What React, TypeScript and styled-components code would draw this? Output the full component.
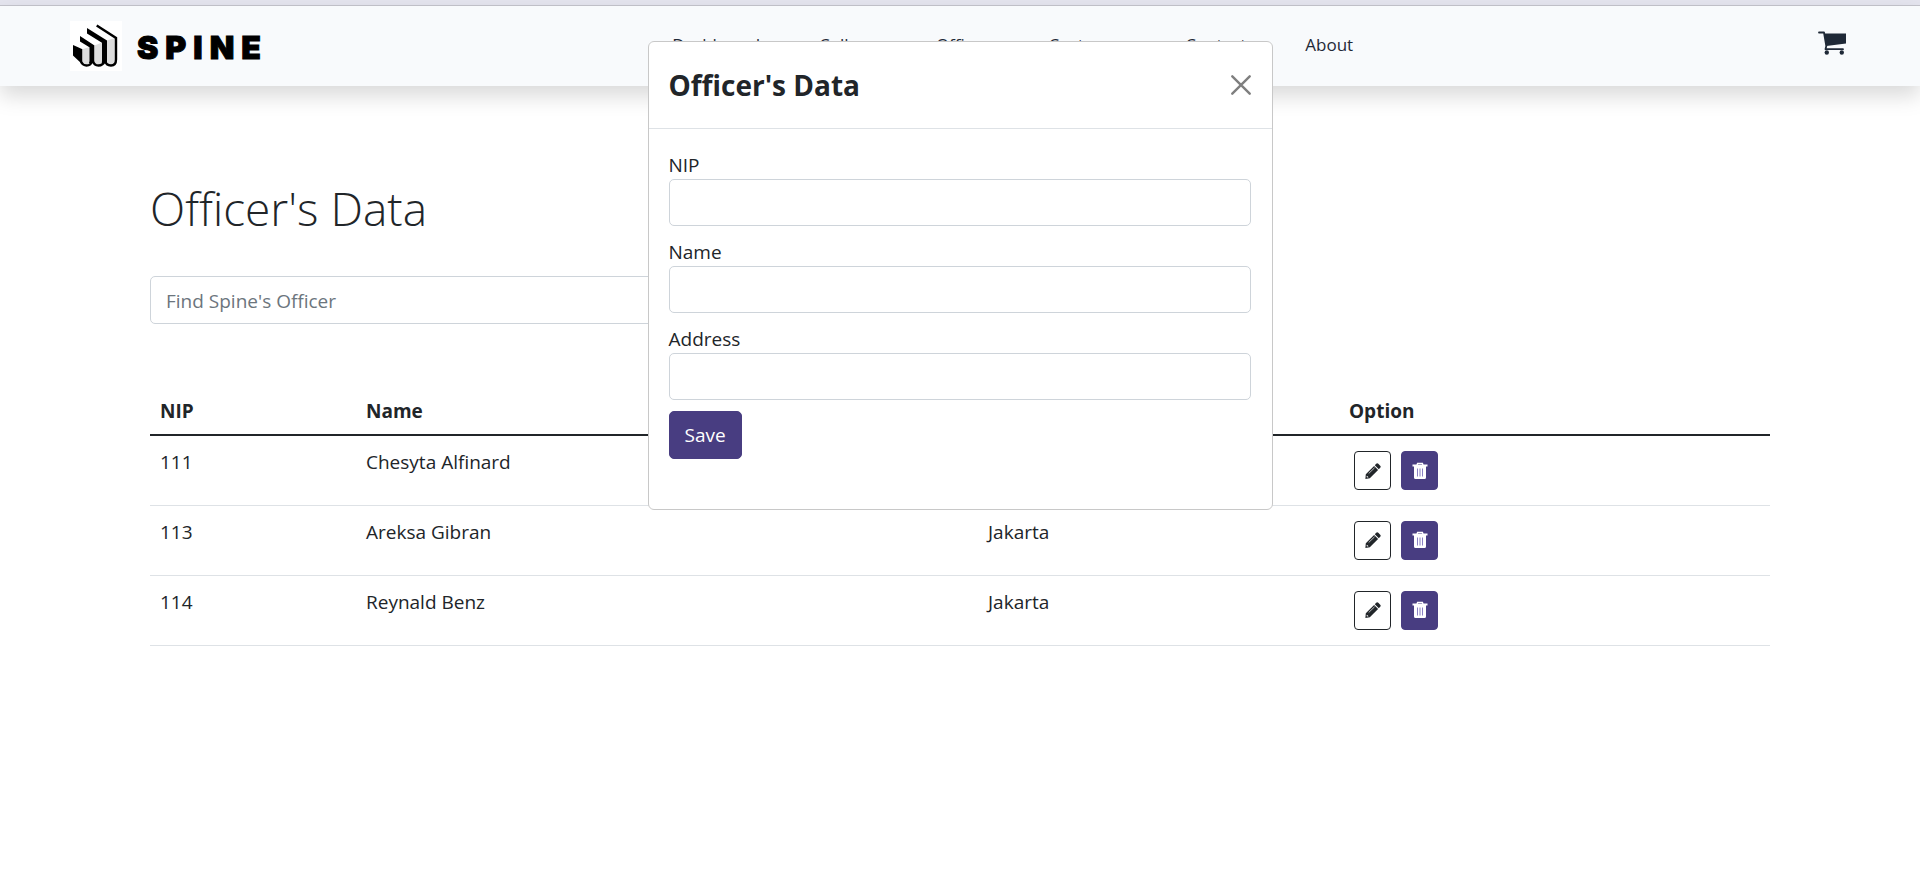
import React from "react";
import styled, { createGlobalStyle } from "styled-components";

const Global = createGlobalStyle`
  *, *::before, *::after { box-sizing: border-box; }
  body {
    margin: 0;
    background: #fff;
    color: #212529;
    font-family: "Open Sans", "Noto Sans", sans-serif;
    font-size: 19px;
    line-height: 30px;
  }
  button, input { font: inherit; color: inherit; }
`;

const TopStrip = styled.div`
  height: 6px;
  background: #e4e4ee;
  border-bottom: 1px solid #c4c4cc;
`;

const Navbar = styled.header`
  display: grid;
  grid-template-columns: 11fr auto 9fr;
  align-items: center;
  height: 80px;
  padding: 0 74px 0 70px;
  background: #f8fafc;
  box-shadow: 0 10px 20px rgba(0, 0, 0, 0.15);
`;

const Brand = styled.a`
  display: flex;
  align-items: center;
  gap: 15px;
  color: #000;
  text-decoration: none;
`;

const BrandName = styled.span`
  padding-top: 3px;
  font-family: Inter, sans-serif;
  font-size: 32px;
  font-weight: 900;
  line-height: 40px;
  letter-spacing: 7px;
  -webkit-text-stroke: 1px #000;
`;

const NavLinks = styled.nav`
  display: flex;
  gap: 59px;
  padding-bottom: 3px;
`;

const NavLink = styled.a`
  color: #1f2937;
  font-size: 17px;
  font-weight: 500;
  text-decoration: none;
`;

const CartLink = styled.a`
  display: flex;
  justify-self: end;
  padding-bottom: 6px;
  color: #1f2937;
`;

const Container = styled.main`
  max-width: 1650px;
  margin: 0 auto;
  padding: 92px 15px 0;
`;

const PageTitle = styled.h1`
  margin: 0 0 38px;
  font-size: 46px;
  font-weight: 300;
  line-height: 60px;
`;

const TextInput = styled.input`
  display: block;
  width: 100%;
  height: 47px;
  padding: 0 15px;
  border: 1px solid #ced4da;
  border-radius: 5px;
  background: #fff;
`;

const SearchInput = styled(TextInput)`
  width: 50%;
  height: 48px;
  padding-top: 2px;
  &::placeholder { color: #6c757d; opacity: 1; }
`;

const Table = styled.table`
  width: 100%;
  margin-top: 60px;
  border-collapse: collapse;
  table-layout: fixed;
`;

const HeadCell = styled.th<{ $width: string }>`
  width: ${(p) => p.$width};
  height: 51px;
  padding: 11px 10px 8px;
  border-bottom: 2px solid #212529;
  font-weight: 700;
  text-align: left;
`;

const Cell = styled.td`
  height: 70px;
  padding: 11px 10px 10px;
  border-bottom: 1px solid #dee2e6;
  vertical-align: top;
`;

const Actions = styled.div`
  display: flex;
  gap: 10px;
  padding: 4px 5px 0;
`;

const IconButton = styled.button<{ $filled?: boolean }>`
  display: flex;
  align-items: center;
  justify-content: center;
  width: 37px;
  height: 39px;
  padding: 0;
  border: 1px solid ${(p) => (p.$filled ? "#483d81" : "#212529")};
  border-radius: 4px;
  background: ${(p) => (p.$filled ? "#483d81" : "#fff")};
  color: ${(p) => (p.$filled ? "#fff" : "#212529")};
`;

const ModalLayer = styled.div`
  position: fixed;
  inset: 0;
  display: flex;
  align-items: flex-start;
  justify-content: center;
  padding-top: 41px;
`;

const Modal = styled.section`
  width: 625px;
  border: 1px solid #c8c8c8;
  border-radius: 6px;
  background: #fff;
`;

const ModalHeader = styled.div`
  display: flex;
  align-items: center;
  justify-content: space-between;
  height: 87px;
  padding: 0 21px 0 20px;
  border-bottom: 1px solid #dee2e6;
`;

const ModalTitle = styled.h2`
  margin: 0;
  font-size: 28px;
  font-weight: 700;
  line-height: 40px;
`;

const CloseButton = styled.button`
  display: flex;
  padding: 0;
  border: 0;
  background: none;
  color: #7f7f7f;
`;

const Form = styled.form`
  padding: 20px 21px 50px 20px;
`;

const Field = styled.label`
  display: block;
  margin-bottom: 10px;
`;

const FieldName = styled.span`
  display: block;
  padding-top: 2px;
  line-height: 28px;
`;

const SaveButton = styled.button`
  height: 48px;
  margin-top: 1px;
  padding: 0 15px;
  border: 1px solid #483d81;
  border-radius: 5px;
  background: #483d81;
  color: #fff;
  font-weight: 500;
`;

const Logo = () => (
  <svg width="52" height="50" viewBox="0 0 52 50" aria-hidden="true">
    <rect width="52" height="50" fill="#fff" />
    <g fill="#000">
      <path d="M3 24 L12.500 28.300 V43.500 L3 34.500Z" />
      <path d="M10 15 L24.500 24.500 V42 H19 V26 L10 20.500Z" />
      <path d="M17 7 L37 19.500 V42 H31.500 V21.500 L17 12.500Z" />
    </g>
    <g fill="#ddd" stroke="none">
      <path d="M12.500 28.300 L19.500 26 V40 Q19 44 16 44 Q12.500 44 12.500 39Z" />
      <path d="M24.500 24.500 L32 21.500 V40 Q31.500 44 28.200 44 Q24.500 44 24.500 39Z" />
      <path d="M37 19.500 L45 17 V39 Q45 44 41 44 Q37 44 37 39Z" />
    </g>
    <path d="M26.700 4.500 L46 17 V38.500 Q46 44.500 41 44.500 Q36 44.500 35 39.500 Q33 44.500 28.500 44.500 Q24 44.500 22.500 39.500 Q21 44.500 16.500 44.500 Q13 44.500 11 41" fill="none" stroke="#000" strokeWidth="2.400" />
  </svg>
);

const Cart = () => (
  <svg width="28" height="24" viewBox="0 0 28 24" aria-hidden="true" fill="currentColor">
    <path d="M6.300 2.500 H28 V12.500 L8.300 15Z" />
    <path d="M1 1.500 H6 L8.300 15 L7.500 18.200 H25" fill="none" stroke="currentColor" strokeWidth="1.800" strokeLinecap="round" strokeLinejoin="round" />
    <circle cx="8.800" cy="21.500" r="2.200" />
    <circle cx="23.800" cy="21.500" r="2.200" />
  </svg>
);

const Close = () => (
  <svg width="20" height="20" viewBox="0 0 20 20" aria-hidden="true" stroke="currentColor" strokeWidth="2.400" strokeLinecap="round">
    <path d="M1.300 1.300 L18.700 18.700 M18.700 1.300 L1.300 18.700" />
  </svg>
);

const Pencil = () => (
  <svg width="16" height="16" viewBox="0 0 16 16" aria-hidden="true" fill="currentColor">
    <path d="M11.200.8a1.500 1.500 0 0 1 2.100 0l1.900 1.900a1.500 1.500 0 0 1 0 2.100L13.800 6.200 9.800 2.200Z M9.100 2.900 13.100 6.900 4.800 15.200.4 15.900.8 11.200Z" />
    <path d="M3.700 10.500 9.600 4.800" stroke="#fff" strokeWidth=".7" />
    <path d="M1.900 12.700 3.600 14.300 2.300 14.600 1.600 14Z" fill="#fff" />
  </svg>
);

const Trash = () => (
  <svg width="16" height="18" viewBox="0 0 16 18" aria-hidden="true">
    <path d="M5 3 L5.600 1.400 H10.400 L11 3" fill="none" stroke="currentColor" strokeWidth="1.400" />
    <path d="M.5 2.600H15.500V4.600H14V15.500Q14 17 12.500 17H3.500Q2 17 2 15.500V4.600H.5Z" fill="currentColor" />
    <path d="M5.500 6.500V14.500M8 6.500V14.500M10.500 6.500V14.500" stroke="#8a80c4" />
  </svg>
);

const links = ["Dashboard", "College", "Officer", "Customer", "Contact", "About"];

const columns = [
  { name: "NIP", width: "206px" },
  { name: "Name", width: "622px" },
  { name: "Address", width: "361px" },
  { name: "Option", width: "auto" },
];

const officers = [
  { nip: "111", name: "Chesyta Alfinard", address: "Jakarta" },
  { nip: "113", name: "Areksa Gibran", address: "Jakarta" },
  { nip: "114", name: "Reynald Benz", address: "Jakarta" },
];

export default function App() {
  return (
    <>
      <Global />
      <TopStrip />
      <Navbar>
        <Brand href="#">
          <Logo />
          <BrandName>SPINE</BrandName>
        </Brand>
        <NavLinks>
          {links.map((link) => (
            <NavLink key={link} href="#">{link}</NavLink>
          ))}
        </NavLinks>
        <CartLink href="#" aria-label="Cart"><Cart /></CartLink>
      </Navbar>

      <Container>
        <PageTitle>Officer's Data</PageTitle>
        <SearchInput type="search" placeholder="Find Spine's Officer" aria-label="Find Spine's Officer" />
        <Table>
          <thead>
            <tr>
              {columns.map((column) => (
                <HeadCell key={column.name} $width={column.width}>{column.name}</HeadCell>
              ))}
            </tr>
          </thead>
          <tbody>
            {officers.map((officer) => (
              <tr key={officer.nip}>
                <Cell>{officer.nip}</Cell>
                <Cell>{officer.name}</Cell>
                <Cell>{officer.address}</Cell>
                <Cell>
                  <Actions>
                    <IconButton type="button" aria-label="Edit"><Pencil /></IconButton>
                    <IconButton type="button" aria-label="Delete" $filled><Trash /></IconButton>
                  </Actions>
                </Cell>
              </tr>
            ))}
          </tbody>
        </Table>
      </Container>

      <ModalLayer>
        <Modal role="dialog" aria-labelledby="modal-title">
          <ModalHeader>
            <ModalTitle id="modal-title">Officer's Data</ModalTitle>
            <CloseButton type="button" aria-label="Close"><Close /></CloseButton>
          </ModalHeader>
          <Form>
            {["NIP", "Name", "Address"].map((name) => (
              <Field key={name}>
                <FieldName>{name}</FieldName>
                <TextInput type="text" />
              </Field>
            ))}
            <SaveButton type="submit">Save</SaveButton>
          </Form>
        </Modal>
      </ModalLayer>
    </>
  );
}
